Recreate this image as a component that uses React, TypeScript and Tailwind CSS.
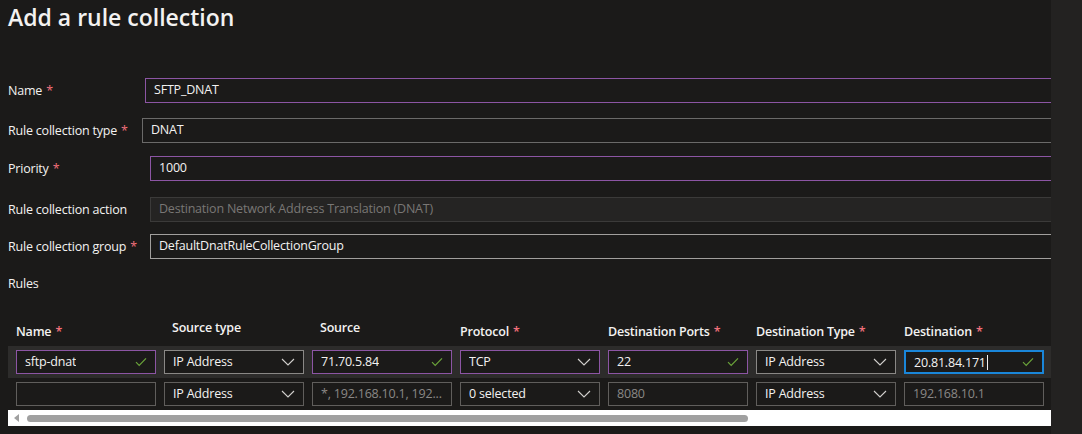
const FONT = "font-['Open_Sans','Noto_Sans',sans-serif] tracking-[-0.2px]"

const Star = () => <span className="ml-1 text-[#f1707b]">*</span>

const Check = () => (
  <svg width="12" height="10" viewBox="0 0 12 10" className="shrink-0">
    <path d="M1 5.2 L4.2 8.4 L11 1.4" fill="none" stroke="#6ba43a" strokeWidth="1.2" />
  </svg>
)

const Chevron = () => (
  <svg width="14" height="8" viewBox="0 0 14 8" className="shrink-0">
    <path d="M1 1 L7 7 L13 1" fill="none" stroke="#d2d0ce" strokeWidth="1.1" />
  </svg>
)

type CellProps = {
  value?: string
  placeholder?: string
  kind?: 'text' | 'select'
  border?: string
  check?: boolean
  cursor?: boolean
}

const Cell = ({ value, placeholder, kind = 'text', border = 'border-[#605e5c]', check, cursor }: CellProps) => (
  <div className={`flex h-[24px] w-[140px] shrink-0 items-center justify-between border ${border} bg-[#1b1a19] pl-2 pr-2`}>
    <span className={`truncate text-[12.5px] ${value ? 'text-[#f3f2f1]' : 'text-[#8a8886]'}`}>
      {value ?? placeholder}
      {cursor && <span className="ml-px inline-block h-[15px] w-px translate-y-[3px] bg-[#f3f2f1]" />}
    </span>
    {kind === 'select' ? <Chevron /> : check ? <Check /> : null}
  </div>
)

const FormRow = ({
  label,
  required,
  labelW,
  top,
  value,
  box,
  text = 'text-[#f3f2f1]',
}: {
  label: string
  required?: boolean
  labelW: string
  top: string
  value: string
  box: string
  text?: string
}) => (
  <div className={`flex items-center ${top}`}>
    <div className={`${labelW} shrink-0 pl-2 pt-[2px] text-[12.5px] text-[#f3f2f1]`}>
      {label}
      {required && <Star />}
    </div>
    <div className={`flex h-[25px] flex-1 items-center border border-r-0 pl-2 text-[12.5px] ${box} ${text}`}>{value}</div>
  </div>
)

const headers = [
  { label: 'Name', req: true, cls: '' },
  { label: 'Source type', req: false, cls: 'pl-2 -translate-y-[4px]' },
  { label: 'Source', req: false, cls: 'pl-2 -translate-y-[4px]' },
  { label: 'Protocol', req: true, cls: '' },
  { label: 'Destination Ports', req: true, cls: '' },
  { label: 'Destination Type', req: true, cls: '' },
  { label: 'Destination', req: true, cls: '' },
]

export default function App() {
  const purple = 'border-[#8c55a4]'
  return (
    <div className={`flex h-[434px] w-[1082px] overflow-hidden bg-[#232221] ${FONT}`}>
      <div className="w-[1051px] shrink-0 overflow-hidden bg-[#1b1a19]">
        <h1 className="pl-2 pt-px text-[23px] font-semibold leading-[32px] tracking-normal text-[#f3f2f1]">Add a rule collection</h1>

        <FormRow label="Name" required labelW="w-[145px]" top="mt-[45px]" value="SFTP_DNAT" box={purple} />
        <FormRow label="Rule collection type" required labelW="w-[142px]" top="mt-[15px]" value="DNAT" box="border-[#6b6a69]" />
        <FormRow label="Priority" required labelW="w-[150px]" top="mt-[13px]" value="1000" box={purple} />
        <FormRow
          label="Rule collection action"
          labelW="w-[150px]"
          top="mt-[16px]"
          value="Destination Network Address Translation (DNAT)"
          box="border-[#3b3a39] bg-[#252423]"
          text="text-[#797775]"
        />
        <FormRow label="Rule collection group" required labelW="w-[150px]" top="mt-[12px]" value="DefaultDnatRuleCollectionGroup" box="border-[#a19f9d]" />

        <div className="mt-[17px] pl-2 text-[12.5px] leading-4 text-[#f3f2f1]">Rules</div>

        <div className="mt-[28px] flex h-[22px] items-end gap-2 pl-4">
          {headers.map((h) => (
            <div key={h.label} className={`w-[140px] shrink-0 text-[12.5px] font-semibold text-[#f3f2f1] ${h.cls}`}>
              {h.label}
              {h.req && <Star />}
            </div>
          ))}
        </div>

        <div className="ml-2 mt-[4px] flex h-[32px] items-center gap-2 bg-[#2d2c2b] pl-2">
          <Cell value="sftp-dnat" border={purple} check />
          <Cell value="IP Address" kind="select" border="border-[#8a8886]" />
          <Cell value="71.70.5.84" border={purple} check />
          <Cell value="TCP" kind="select" border={purple} />
          <Cell value="22" border={purple} check />
          <Cell value="IP Address" kind="select" border="border-[#8a8886]" />
          <Cell value="20.81.84.171" border="border-[#1a86d9] border-2" check cursor />
        </div>

        <div className="mt-[4px] flex items-center gap-2 pl-4">
          <Cell placeholder="" border="border-[#605e5c]" />
          <Cell value="IP Address" kind="select" border="border-[#605e5c]" />
          <Cell placeholder="*, 192.168.10.1, 192..." border="border-[#605e5c]" />
          <Cell value="0 selected" kind="select" border="border-[#605e5c]" />
          <Cell placeholder="8080" border="border-[#605e5c]" />
          <Cell value="IP Address" kind="select" border="border-[#605e5c]" />
          <Cell placeholder="192.168.10.1" border="border-[#605e5c]" />
        </div>

        <div className="ml-2 mt-[4px] flex h-[16px] items-center bg-white pl-[6px]">
          <svg width="6" height="8" viewBox="0 0 6 8" className="shrink-0">
            <path d="M5 0 L0 4 L5 8 Z" fill="#a0a0a0" />
          </svg>
          <div className="ml-[7px] h-[7px] w-[721px] rounded-full bg-[#a0a0a0]" />
        </div>
      </div>
      <div className="flex-1 bg-[#232221]" />
    </div>
  )
}
